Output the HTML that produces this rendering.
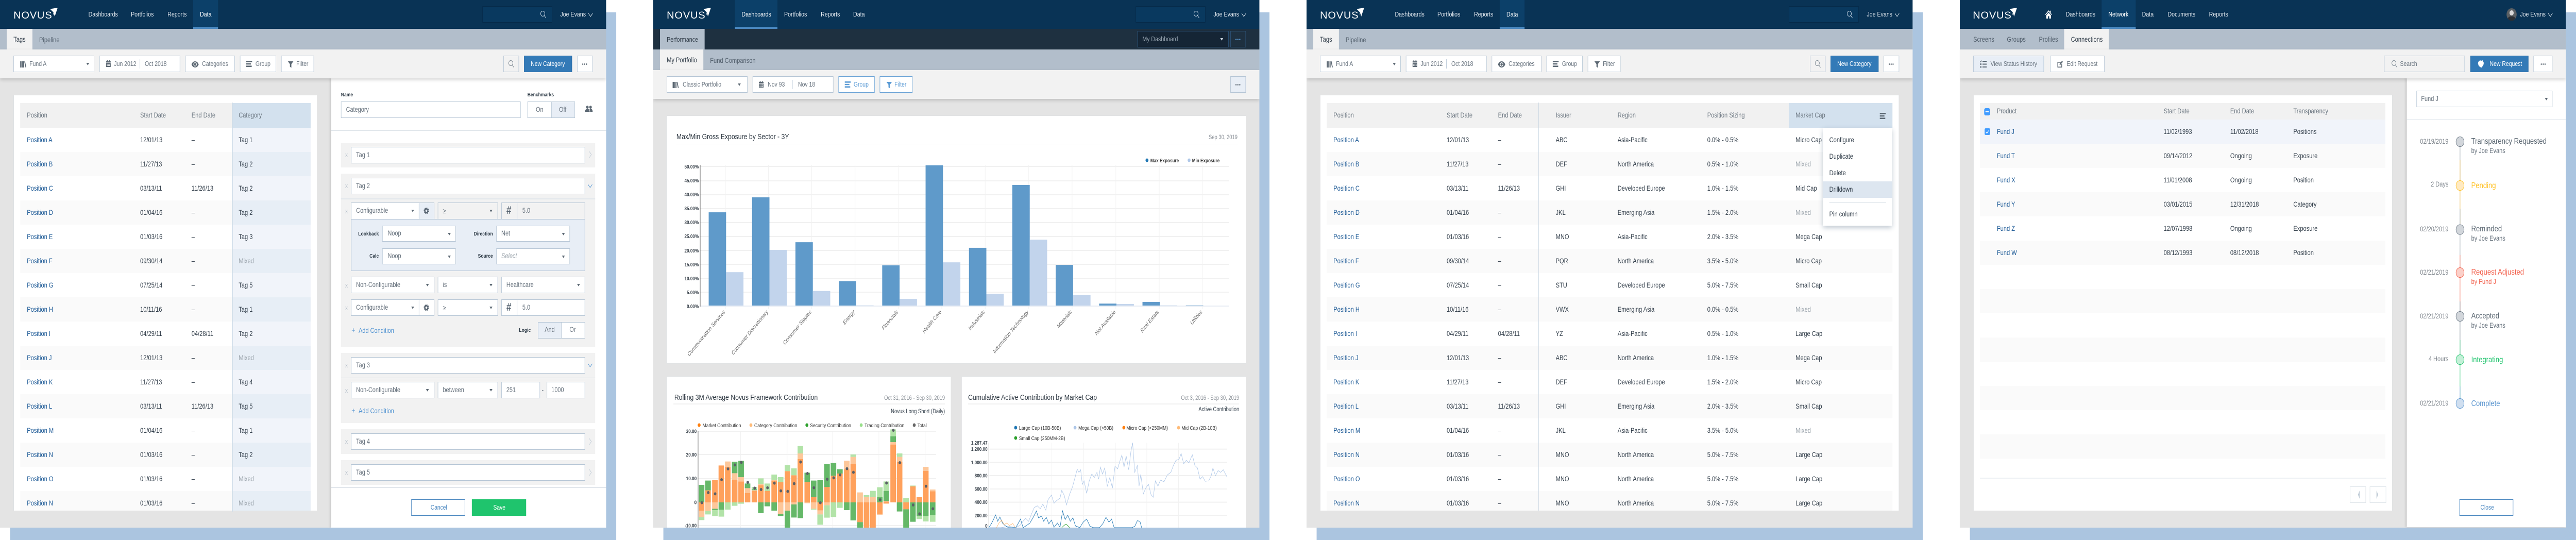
<!DOCTYPE html>
<html lang="en"><head><meta charset="utf-8"><title>Novus</title>
<style>
html,body{margin:0;padding:0;background:#fff;width:100%;height:1048px}
#fit{position:absolute;left:0;top:0;width:100%;height:1048px;overflow:hidden}
#root{position:absolute;left:0;top:0;width:6120px;height:1048px;overflow:hidden;transform-origin:0 0;font-family:"Liberation Sans",sans-serif}
.b{position:absolute;top:24px;width:1440px;height:1024px;background:#abc5e0}
.p{position:absolute;top:0;width:1440px;height:1024px;overflow:hidden;background:#e4e4e4;color:#333f4b;font-size:13.6px}
.a{position:absolute;box-sizing:border-box}
.t{position:absolute;white-space:nowrap;line-height:0}
.nav{position:absolute;left:0;top:0;width:1440px;height:56px;background:#093355}
.nv{font-size:13px;color:#e3eaf0;top:28px}
.act{position:absolute;top:0;height:56px;background:#0c4069;border-bottom:4px solid #4a88c0;box-sizing:border-box}
.logo{position:absolute;left:32px;top:30px;line-height:0;font-size:19.5px;color:#fff;transform:scaleX(1.25);transform-origin:0 0;letter-spacing:.9px;white-space:nowrap}
.srch{position:absolute;left:1146px;top:12px;width:166px;height:32px;background:#09395f;border:1px solid #062a49;box-sizing:border-box}
.sub{position:absolute;left:0;width:1440px;height:40px;background:#b2becb}
.tab{position:absolute;background:#f2f2f2}
.s{font-size:13.6px;color:#55626f}
.tb{position:absolute;left:0;width:1440px;height:56px;background:#f2f2f2;box-shadow:0 3px 7px rgba(0,0,0,.16);z-index:2}
.bx{position:absolute;box-sizing:border-box;background:#fff;border:1px solid #b5c5d5}
.g{font-size:12.8px;color:#6a7580}
.bl{font-size:12.8px;color:#5b9bd5}
.card{position:absolute;background:#fff;box-shadow:0 0 1px #ccd6df}
.rows{position:absolute;overflow:hidden;font-size:13.6px;color:#333f4b}
.r{position:relative;height:47px;line-height:47px}
.r:nth-child(even){background:#fafafa}
.r span{position:absolute;white-space:nowrap;top:0}
.r .l{color:#1d5a96}
.r .m{color:#9aa3ab}
.hd{position:absolute;height:48px;background:#f1f1f1;line-height:48px;color:#6b7680;font-size:13.6px}
.hd span{position:absolute;white-space:nowrap;top:0}
.cat{left:503px;width:187px;height:47px;padding-left:16px;box-sizing:border-box}
.r:nth-child(odd) .cat{background:#f1f4fa}
.r:nth-child(even) .cat{background:#e7eef6}
.rp{position:absolute;background:#fff;box-shadow:-3px 0 4px rgba(0,0,0,.12)}
.tg{position:absolute;left:810px;width:604px;background:#f2f2f2}
.x{font-size:13px;color:#b8c2cc;left:820px}
.v{font-size:13.4px;color:#66717c}
.lb{font-size:10.5px;font-weight:bold;color:#2b3844}
.ov{position:absolute;left:0;top:0;z-index:5;pointer-events:none}
.ct{font-size:15px;color:#2c3640}
.dt{font-size:11.5px;color:#8a9097}
.bt{font-size:12.6px}
.tl{font-size:16px}
.ts{font-size:13.5px}
.td{font-size:13.5px;color:#80878e}
svg text{font-family:"Liberation Sans",sans-serif}
</style></head><body>
<div id="fit"><div id="root">
<svg width="0" height="0" style="position:absolute;left:0;top:0"><defs>
<g id="lib"><path d="M0 1h3v12H0zM3.7 1h2.6v12H3.7zM7 1h2.2v12H7zM9.6 1.4l1.9-.5 3 11.6-1.9.5z"/></g>
<g id="cal"><path d="M2 0h2v2h3V0h2v2h2v2.4H0V2h2zM0 5.4h11V13H0zM1.6 7v1.4h2V7zm2.9 0v1.4h2V7zm2.9 0v1.4h2V7zM1.6 9.6V11h2V9.6zm2.9 0V11h2V9.6zm2.9 0V11h2V9.6z" fill-rule="evenodd"/></g>
<g id="eye"><path d="M8.5 0C4 0 1 3.3 0 6c1 2.7 4 6 8.5 6S16 8.7 17 6C16 3.3 13 0 8.5 0zm0 2a4 4 0 1 1 0 8 4 4 0 0 1 0-8zm0 1.3a2.7 2.7 0 1 0 0 5.4 2.7 2.7 0 0 0 0-5.4z" fill-rule="evenodd"/></g>
<g id="bars"><path d="M0 0h14v2.6H0zM0 4.7h11v2.6H0zM0 9.4h13v2.6H0z"/></g>
<g id="fun"><path d="M0 0h13L8.2 5.4V12.500L4.800 10.500V5.400z"/></g>
<g id="sr"><circle cx="5.500" cy="5.500" r="5" fill="none" stroke-width="1.100"/><path d="M9 9l4 5" fill="none" stroke-width="1.100"/></g>
<g id="dots"><circle cx="1.500" cy="1.500" r="1.400"/><circle cx="6" cy="1.500" r="1.400"/><circle cx="10.500" cy="1.500" r="1.400"/></g>
<g id="cr"><path d="M0 0h7L3.500 4.800z"/></g>
<g id="ppl"><circle cx="5.500" cy="3" r="3"/><circle cx="13" cy="3" r="3"/><path d="M0 12c0-4 2-5.500 5.500-5.500S11 8 11 12zM12 12c0-2-.5-3.500-1.500-4.800C11.500 6.700 12 6.500 13 6.500c3.500 0 5 1.500 5 5.500z"/></g>
<g id="gear"><circle cx="6" cy="7" r="3.600" fill="none" stroke-width="2.600"/><circle cx="6" cy="7" r="5.400" fill="none" stroke-width="1.800" stroke-dasharray="2.400 1.840"/></g>
<g id="chd"><path d="M0 0l5 6 5-6" fill="none" stroke-width="1.100"/></g>
<g id="chr"><path d="M0 0l5 6-5 6" fill="none" stroke-width="1.100"/></g>
<g id="plane"><path d="M0 2.500L18 0 11 17 8 9zM8 9l-1 5 2.500-2.800z"/></g>
<g id="home"><path d="M8 0l3 3V.8h2v4.400L16 8l-1 1-7-6.500L1 9 0 8zM2.500 9.500L8 4.500l5.500 5V16H9.500v-4.500h-3V16h-4z"/></g>
<g id="hist"><path d="M6 1h10v2H6zM6 6.500h10v2H6zM6 12h10v2H6z"/><circle cx="2" cy="7.500" r="1.600"/><circle cx="2" cy="13" r="1.600"/><path d="M.5 2l1.300 1.200L4 .5" fill="none" stroke="#5c6873" stroke-width="1.200"/></g>
<g id="edit"><path d="M1 3h8v1.600H2.600v7.800h7.800V7H12v7H1z"/><path d="M6 9l.6-2.500L12 1l2 2-5.500 5.500z"/></g>
<g id="hs"><path d="M3 4l4-3 3 1 3-1 3 5-1 4-4 5-2 0-5-3-2-5z"/></g>
</defs></svg>

<!-- PANEL 1 -->
<div class="b" style="left:24px"></div>
<div class="p" style="left:0">
<div class="nav"></div>
<div class="logo">NOVUS</div>
<div class="act" style="left:459px;width:59px"></div>
<span class="t nv" style="left:210px">Dashboards</span><span class="t nv" style="left:311px">Portfolios</span><span class="t nv" style="left:398px">Reports</span><span class="t nv" style="left:475px;color:#fff">Data</span>
<div class="srch"></div>
<span class="t nv" style="left:1331px">Joe Evans</span>
<div class="sub" style="top:56px"></div>
<div class="tab" style="left:16px;top:56px;width:61px;height:40px"></div>
<span class="t s" style="left:32px;top:77px;color:#333f4b">Tags</span><span class="t s" style="left:93px;top:77.500px">Pipeline</span>
<div class="tb" style="top:96px"></div>

<div class="card" style="left:33px;top:185px;width:720px;height:806px"></div>
<div class="hd" style="left:48px;top:200px;width:690px"><span style="left:16px">Position</span><span style="left:285px">Start Date</span><span style="left:407px">End Date</span><span style="left:503px;width:187px;height:48px;background:#d3e1ee;padding-left:16px;box-sizing:border-box">Category</span></div>
<div class="rows" style="left:48px;top:248px;width:690px;height:743px">
<div class="r"><span class="l" style="left:16px">Position A</span><span style="left:285px">12/01/13</span><span style="left:407px">–</span><span class="cat">Tag 1</span></div>
<div class="r"><span class="l" style="left:16px">Position B</span><span style="left:285px">11/27/13</span><span style="left:407px">–</span><span class="cat">Tag 2</span></div>
<div class="r"><span class="l" style="left:16px">Position C</span><span style="left:285px">03/13/11</span><span style="left:407px">11/26/13</span><span class="cat">Tag 2</span></div>
<div class="r"><span class="l" style="left:16px">Position D</span><span style="left:285px">01/04/16</span><span style="left:407px">–</span><span class="cat">Tag 2</span></div>
<div class="r"><span class="l" style="left:16px">Position E</span><span style="left:285px">01/03/16</span><span style="left:407px">–</span><span class="cat">Tag 3</span></div>
<div class="r"><span class="l" style="left:16px">Position F</span><span style="left:285px">09/30/14</span><span style="left:407px">–</span><span class="cat m">Mixed</span></div>
<div class="r"><span class="l" style="left:16px">Position G</span><span style="left:285px">07/25/14</span><span style="left:407px">–</span><span class="cat">Tag 5</span></div>
<div class="r"><span class="l" style="left:16px">Position H</span><span style="left:285px">10/11/16</span><span style="left:407px">–</span><span class="cat">Tag 1</span></div>
<div class="r"><span class="l" style="left:16px">Position I</span><span style="left:285px">04/29/11</span><span style="left:407px">04/28/11</span><span class="cat">Tag 2</span></div>
<div class="r"><span class="l" style="left:16px">Position J</span><span style="left:285px">12/01/13</span><span style="left:407px">–</span><span class="cat m">Mixed</span></div>
<div class="r"><span class="l" style="left:16px">Position K</span><span style="left:285px">11/27/13</span><span style="left:407px">–</span><span class="cat">Tag 4</span></div>
<div class="r"><span class="l" style="left:16px">Position L</span><span style="left:285px">03/13/11</span><span style="left:407px">11/26/13</span><span class="cat">Tag 5</span></div>
<div class="r"><span class="l" style="left:16px">Position M</span><span style="left:285px">01/04/16</span><span style="left:407px">–</span><span class="cat">Tag 1</span></div>
<div class="r"><span class="l" style="left:16px">Position N</span><span style="left:285px">01/03/16</span><span style="left:407px">–</span><span class="cat">Tag 2</span></div>
<div class="r"><span class="l" style="left:16px">Position O</span><span style="left:285px">01/03/16</span><span style="left:407px">–</span><span class="cat m">Mixed</span></div>
<div class="r"><span class="l" style="left:16px">Position N</span><span style="left:285px">01/03/16</span><span style="left:407px">–</span><span class="cat m">Mixed</span></div>
</div>
<div class="a" style="left:551px;top:199px;width:2px;height:794px;background:#cfdce8"></div>

<div class="rp" style="left:787px;top:152px;width:653px;height:872px"></div>
<span class="t lb" style="left:810px;top:184px">Name</span><span class="t lb" style="left:1253px;top:184px">Benchmarks</span>
<div class="bx" style="left:810px;top:197px;width:427px;height:32px"></div><span class="t v" style="left:822px;top:213px">Category</span>
<div class="bx" style="left:1253px;top:197px;width:113px;height:32px"></div><div class="a" style="left:1310px;top:198px;width:55px;height:30px;background:#e8eef6;border-left:1px solid #b5c5d5"></div>
<span class="t v" style="left:1273px;top:213px">On</span><span class="t v" style="left:1328px;top:213px">Off</span>
<div class="a" style="left:787px;top:252px;width:653px;height:2px;background:#e2e7ec"></div>

<div class="tg" style="top:277px;height:48px"></div><span class="t x" style="top:301px">x</span>
<div class="bx" style="left:834px;top:285px;width:556px;height:32px"></div><span class="t v" style="left:846px;top:301px">Tag 1</span>

<div class="tg" style="top:337px;height:336px"></div><span class="t x" style="top:361px">x</span>
<div class="bx" style="left:834px;top:345px;width:556px;height:32px"></div><span class="t v" style="left:846px;top:361px">Tag 2</span>
<div class="a" style="left:810px;top:385px;width:604px;height:2px;background:#e2e7ec"></div>
<span class="t x" style="top:410px">x</span>
<div class="bx" style="left:834px;top:393px;width:198px;height:33px"></div><div class="a" style="left:995px;top:394px;width:36px;height:31px;background:#e8eef6;border-left:1px solid #b5c5d5"></div>
<span class="t v" style="left:846px;top:409px">Configurable</span>
<div class="bx" style="left:1040px;top:393px;width:143px;height:33px;background:#f2f2f2"></div><span class="t v" style="left:1052px;top:410px">≥</span>
<div class="bx" style="left:1191px;top:393px;width:199px;height:33px;background:#f2f2f2"></div><div class="a" style="left:1228px;top:394px;width:1px;height:31px;background:#b5c5d5"></div>
<span class="t" style="left:1203px;top:409px;font-size:21px;font-weight:bold;color:#55626f">#</span><span class="t v" style="left:1241px;top:409px">5.0</span>
<div class="a" style="left:834px;top:425px;width:556px;height:101px;background:#e8eef6;border:1px solid #b5c5d5"></div>
<span class="t lb" style="right:540px;top:453.500px">Lookback</span><span class="t lb" style="right:269px;top:453.500px">Direction</span>
<span class="t lb" style="right:540px;top:497px">Calc</span><span class="t lb" style="right:269px;top:497px">Source</span>
<div class="bx" style="left:908px;top:438px;width:175px;height:31px"></div><span class="t v" style="left:921px;top:453px">Noop</span>
<div class="bx" style="left:1179px;top:438px;width:175px;height:31px"></div><span class="t v" style="left:1191px;top:453px">Net</span>
<div class="bx" style="left:908px;top:482px;width:175px;height:31px"></div><span class="t v" style="left:921px;top:497px">Noop</span>
<div class="bx" style="left:1179px;top:482px;width:175px;height:31px"></div><span class="t v" style="left:1191px;top:497px;font-style:italic;color:#9aa3ab">Select</span>

<span class="t x" style="top:554px">x</span>
<div class="bx" style="left:834px;top:537px;width:198px;height:32px"></div><span class="t v" style="left:846px;top:553px">Non-Configurable</span>
<div class="bx" style="left:1040px;top:537px;width:143px;height:32px"></div><span class="t v" style="left:1052px;top:553px">is</span>
<div class="bx" style="left:1191px;top:537px;width:199px;height:32px"></div><span class="t v" style="left:1203px;top:553px">Healthcare</span>
<span class="t x" style="top:598px">x</span>
<div class="bx" style="left:834px;top:581px;width:198px;height:32px"></div><div class="a" style="left:995px;top:582px;width:1px;height:30px;background:#b5c5d5"></div><span class="t v" style="left:846px;top:597px">Configurable</span>
<div class="bx" style="left:1040px;top:581px;width:143px;height:32px"></div><span class="t v" style="left:1052px;top:598px">≥</span>
<div class="bx" style="left:1191px;top:581px;width:199px;height:32px"></div><div class="a" style="left:1228px;top:582px;width:1px;height:30px;background:#b5c5d5"></div>
<span class="t" style="left:1203px;top:597px;font-size:21px;font-weight:bold;color:#55626f">#</span><span class="t v" style="left:1241px;top:597px">5.0</span>
<span class="t v" style="left:835px;top:642px;color:#4a8fd0;font-size:15px">+</span><span class="t v" style="left:852px;top:642px;color:#4a8fd0">Add Condition</span>
<span class="t lb" style="left:1233px;top:641px">Logic</span>
<div class="bx" style="left:1278px;top:625px;width:112px;height:32px"></div><div class="a" style="left:1279px;top:626px;width:55px;height:30px;background:#e8eef6;border-right:1px solid #b5c5d5"></div>
<span class="t v" style="left:1294px;top:640px">And</span><span class="t v" style="left:1353px;top:640px">Or</span>

<div class="tg" style="top:685px;height:136px"></div><span class="t x" style="top:709px">x</span>
<div class="bx" style="left:834px;top:693px;width:556px;height:32px"></div><span class="t v" style="left:846px;top:709px">Tag 3</span>
<div class="a" style="left:810px;top:733px;width:604px;height:1px;background:#c9d3dc"></div>
<span class="t x" style="top:758px">x</span>
<div class="bx" style="left:834px;top:741px;width:198px;height:32px"></div><span class="t v" style="left:846px;top:757px">Non-Configurable</span>
<div class="bx" style="left:1040px;top:741px;width:143px;height:32px"></div><span class="t v" style="left:1052px;top:757px">between</span>
<div class="bx" style="left:1191px;top:741px;width:92px;height:32px"></div><span class="t v" style="left:1203px;top:757px">251</span>
<span class="t v" style="left:1287px;top:757px">-</span>
<div class="bx" style="left:1299px;top:741px;width:91px;height:32px"></div><span class="t v" style="left:1310px;top:757px">1000</span>
<span class="t v" style="left:835px;top:798px;color:#4a8fd0;font-size:15px">+</span><span class="t v" style="left:852px;top:798px;color:#4a8fd0">Add Condition</span>

<div class="tg" style="top:833px;height:48px"></div><span class="t x" style="top:857px">x</span>
<div class="bx" style="left:834px;top:841px;width:556px;height:32px"></div><span class="t v" style="left:846px;top:857px">Tag 4</span>
<div class="tg" style="top:893px;height:48px"></div><span class="t x" style="top:917px">x</span>
<div class="bx" style="left:834px;top:901px;width:556px;height:32px"></div><span class="t v" style="left:846px;top:917px">Tag 5</span>
<div class="a" style="left:787px;top:945px;width:653px;height:2px;background:#e2e7ec"></div>
<div class="bx" style="left:977px;top:969px;width:128px;height:32px;border-color:#4a87c0"></div><span class="t bt" style="left:1023px;top:985px;color:#4a87c0">Cancel</span>
<div class="a" style="left:1121px;top:969px;width:129px;height:32px;background:#1fc46d"></div><span class="t bt" style="left:1172px;top:985px;color:#fff">Save</span>

<div class="bx" style="left:32px;top:108px;width:192px;height:32px;z-index:3"></div>
<div class="bx" style="left:236px;top:108px;width:192px;height:32px;z-index:3"></div>
<div class="bx" style="left:440px;top:108px;width:118px;height:32px;z-index:3"></div>
<div class="bx" style="left:570px;top:108px;width:86px;height:32px;z-index:3"></div>
<div class="bx" style="left:668px;top:108px;width:78px;height:32px;z-index:3"></div>
<div class="bx" style="left:1196px;top:108px;width:37px;height:32px;z-index:3;background:#f2f2f2"></div>
<div class="a" style="left:1245px;top:108px;width:114px;height:32px;z-index:3;background:#337ab7;border:1px solid #2f6fa8"></div>
<div class="bx" style="left:1371px;top:108px;width:37px;height:32px;z-index:3"></div>
<div style="position:absolute;left:0;top:0;z-index:4">
<span class="t g" style="left:70px;top:124px">Fund A</span><span class="t g" style="left:271px;top:124px">Jun 2012</span><span class="t g" style="left:344px;top:124px">Oct 2018</span><span class="t g" style="left:480px;top:124px">Categories</span><span class="t g" style="left:607px;top:124px">Group</span><span class="t g" style="left:704px;top:124px">Filter</span><span class="t g" style="left:1261px;top:124px;color:#fff">New Category</span>
</div>
<svg class="ov" width="1440" height="1024">
<use href="#plane" x="119" y="15" fill="#fff"/>
<use href="#sr" x="1284" y="21" stroke="#c4d2e0" fill="none"/>
<use href="#chd" x="1398" y="26" stroke="#d8e2ea"/>
<use href="#lib" x="48" y="118" fill="#5c6873"/><use href="#cr" x="205" y="122" fill="#5c6873"/>
<use href="#cal" x="252" y="117" fill="#5c6873"/><rect x="332" y="115" width="1" height="18" fill="#b5c5d5"/>
<use href="#eye" x="455" y="119" fill="#5c6873"/><use href="#bars" x="585" y="118" fill="#5c6873"/><use href="#fun" x="684" y="119" fill="#5c6873"/>
<use href="#sr" x="1208" y="117" stroke="#7b8791"/><use href="#dots" x="1383" y="123" fill="#5c6873"/>
<use href="#ppl" x="1390" y="205" fill="#5c6873"/>
<use href="#chr" x="1400" y="294" stroke="#c4ced8"/><use href="#chd" x="1397" y="358" stroke="#5b9bd5"/><use href="#chd" x="1397" y="706" stroke="#5b9bd5"/><use href="#chr" x="1400" y="851" stroke="#c4ced8"/><use href="#chr" x="1400" y="911" stroke="#c4ced8"/>
<use href="#cr" x="977" y="407" fill="#5c6873"/><use href="#gear" x="1007" y="402" fill="none" stroke="#55626f"/><use href="#cr" x="1163" y="407" fill="#5c6873"/>
<use href="#cr" x="1064" y="452" fill="#5c6873"/><use href="#cr" x="1335" y="452" fill="#5c6873"/><use href="#cr" x="1064" y="496" fill="#5c6873"/><use href="#cr" x="1335" y="496" fill="#5c6873"/>
<use href="#cr" x="1012" y="551" fill="#5c6873"/><use href="#cr" x="1163" y="551" fill="#5c6873"/><use href="#cr" x="1371" y="551" fill="#5c6873"/>
<use href="#cr" x="977" y="595" fill="#5c6873"/><use href="#gear" x="1007" y="590" fill="none" stroke="#55626f"/><use href="#cr" x="1163" y="595" fill="#5c6873"/>
<use href="#cr" x="1012" y="755" fill="#5c6873"/><use href="#cr" x="1163" y="755" fill="#5c6873"/>
</svg>
</div>

<!-- PANEL 2 -->
<div class="b" style="left:1576px"></div>
<div class="p" style="left:1552px">
<div class="nav"></div>
<div class="logo">NOVUS</div>
<div class="act" style="left:194px;width:101px"></div>
<span class="t nv" style="left:210px;color:#fff">Dashboards</span><span class="t nv" style="left:311px">Portfolios</span><span class="t nv" style="left:398px">Reports</span><span class="t nv" style="left:475px">Data</span>
<div class="srch"></div>
<span class="t nv" style="left:1331px">Joe Evans</span>
<div class="a" style="left:0;top:56px;width:1440px;height:40px;background:#1e3040"></div>
<div class="a" style="left:16px;top:56px;width:106px;height:40px;background:#b2becb"></div>
<span class="t s" style="left:32px;top:77px;font-size:13px;color:#333f4b">Performance</span>
<div class="a" style="left:1150px;top:60px;width:217px;height:32px;background:#152535;border:1px solid #2d5478"></div>
<span class="t s" style="left:1162px;top:76px;color:#9aa7b3;font-size:13px">My Dashboard</span>
<div class="a" style="left:1371px;top:60px;width:37px;height:32px;border:1px solid #2d5478"></div>
<div class="sub" style="top:96px"></div>
<div class="tab" style="left:16px;top:96px;width:103px;height:40px"></div>
<span class="t s" style="left:32px;top:117px;color:#333f4b">My Portfolio</span><span class="t s" style="left:135px;top:118px">Fund Comparison</span>
<div class="tb" style="top:136px"></div>

<div class="card" style="left:32px;top:225px;width:1376px;height:480px"></div>
<span class="t ct" style="left:55px;top:266px">Max/Min Gross Exposure by Sector - 3Y</span>
<span class="t dt" style="right:52px;top:267px">Sep 30, 2019</span>
<div class="a" style="left:55px;top:279px;width:1333px;height:1px;background:#eee"></div>
<div class="card" style="left:32px;top:731px;width:675px;height:293px"></div>
<div class="card" style="left:733px;top:731px;width:675px;height:293px"></div>
<span class="t ct" style="left:50px;top:772px">Rolling 3M Average Novus Framework Contribution</span>
<span class="t dt" style="right:747px;top:773px">Oct 31, 2016 - Sep 30, 2019</span>
<div class="a" style="left:48px;top:783px;width:645px;height:2px;background:#f0f0f0"></div>
<span class="t dt" style="right:747px;top:799px;color:#333f4b">Novus Long Short (Daily)</span>
<span class="t ct" style="left:748px;top:772px">Cumulative Active Contribution by Market Cap</span>
<span class="t dt" style="right:48px;top:773px">Oct 3, 2016 - Sep 30, 2019</span>
<div class="a" style="left:748px;top:783px;width:644px;height:2px;background:#f0f0f0"></div>
<span class="t dt" style="right:48px;top:795px;color:#333f4b">Active Contribution</span>

<svg class="a" style="left:0;top:0" width="1440" height="1024">
<g fill="none" stroke="#f0f0f0">
<path d="M171.500 320V600M273.500 320V600M376.500 320V600M479.500 320V600M582.500 320V600M685.500 320V600M788.500 320V600M892 320V600M995 320V600M1099 320V600M1202 320V600M1305 320V600"/></g>
<g fill="#f1f1f1"><rect x="111" y="322" width="1257" height="2"/><rect x="111" y="350" width="1257" height="2"/><rect x="111" y="377" width="1257" height="2"/><rect x="111" y="404" width="1257" height="2"/><rect x="111" y="431" width="1257" height="2"/><rect x="111" y="458" width="1257" height="2"/><rect x="111" y="485" width="1257" height="2"/><rect x="111" y="512" width="1257" height="2"/><rect x="111" y="539" width="1257" height="2"/><rect x="111" y="566" width="1257" height="2"/></g>
<g transform="translate(-52,0) scale(1.0204,.41494)">
<g fill="#5f9aca"><rect x="180" y="993" width="40.500" height="439"/><rect x="281" y="923" width="40.500" height="509"/><rect x="382" y="1133" width="40.500" height="299"/><rect x="483" y="1315" width="40.500" height="117"/><rect x="584" y="1241" width="40.500" height="191"/><rect x="685" y="773" width="40.500" height="659"/><rect x="786" y="1159" width="40.500" height="273"/><rect x="887" y="865" width="40.500" height="567"/><rect x="988" y="1239" width="40.500" height="193"/><rect x="1089" y="1420" width="40.500" height="12"/><rect x="1190" y="1412" width="40.500" height="20"/><rect x="1291" y="1428" width="40.500" height="4"/></g>
<g fill="#c2d4ec"><rect x="220.500" y="1273" width="40.500" height="159"/><rect x="321.500" y="1169" width="40.500" height="263"/><rect x="422.500" y="1361" width="40.500" height="71"/><rect x="523.500" y="1428" width="40.500" height="4"/><rect x="624.500" y="1398" width="40.500" height="34"/><rect x="725.500" y="1227" width="40.500" height="205"/><rect x="826.500" y="1374" width="40.500" height="58"/><rect x="927.500" y="1121" width="40.500" height="311"/><rect x="1028.500" y="1380" width="40.500" height="52"/><rect x="1129.500" y="1422" width="40.500" height="10"/><rect x="1230.500" y="1428" width="40.500" height="4"/><rect x="1331.500" y="1430" width="40.500" height="2"/></g>
</g>
<rect x="111" y="593" width="1257" height="2" fill="#e8edf3"/>
<rect x="111" y="320" width="1" height="275" fill="#555"/>
<g font-size="10" font-weight="bold" fill="#3a434c" text-anchor="end"><text x="108" y="327">50.00%</text><text x="108" y="354">45.00%</text><text x="108" y="381">40.00%</text><text x="108" y="408">35.00%</text><text x="108" y="435">30.00%</text><text x="108" y="462">25.00%</text><text x="108" y="490">20.00%</text><text x="108" y="517">15.00%</text><text x="108" y="544">10.00%</text><text x="108" y="571">5.00%</text><text x="108" y="598">0.00%</text></g>
<g font-size="11" font-style="italic" fill="#666" text-anchor="end">
<text transform="translate(171.500,606) rotate(-45)">Communication Services</text><text transform="translate(273.500,606) rotate(-45)">Consumer Discretionary</text><text transform="translate(376.500,606) rotate(-45)">Consumer Staples</text><text transform="translate(479.500,606) rotate(-45)">Energy</text><text transform="translate(582.500,606) rotate(-45)">Financials</text><text transform="translate(685.500,606) rotate(-45)">Health Care</text><text transform="translate(788.500,606) rotate(-45)">Industrials</text><text transform="translate(892,606) rotate(-45)">Information Technology</text><text transform="translate(995,606) rotate(-45)">Materials</text><text transform="translate(1099,606) rotate(-45)">Not Available</text><text transform="translate(1202,606) rotate(-45)">Real Estate</text><text transform="translate(1305,606) rotate(-45)">Utilities</text></g>
<circle cx="1173" cy="311" r="3.500" fill="#1f77b4"/><text x="1181" y="315" font-size="10" font-weight="bold" fill="#333">Max Exposure</text>
<circle cx="1273" cy="311" r="3.500" fill="#aec7e8"/><text x="1280" y="315" font-size="10" font-weight="bold" fill="#333">Min Exposure</text>

<g font-size="10.500" fill="#333"><circle cx="109" cy="825" r="3.500" fill="#ff7f0e"/><text x="117" y="829">Market Contribution</text><circle cx="232" cy="825" r="3.500" fill="#ffbb78"/><text x="240" y="829">Category Contribution</text><circle cx="365" cy="825" r="3.500" fill="#2ca02c"/><text x="372.500" y="829">Security Contribution</text><circle cx="494" cy="825" r="3.500" fill="#98df8a"/><text x="502" y="829">Trading Contribution</text><circle cx="620" cy="825" r="3.500" fill="#666"/><text x="627.500" y="829">Total</text></g>
<g fill="#f1f1f1"><rect x="106" y="836" width="566" height="2"/><rect x="106" y="881" width="566" height="2"/><rect x="106" y="928" width="566" height="2"/><rect x="106" y="1019" width="566" height="2"/></g>
<path d="M207.500 836V1024M318 836V1024M426 836V1024M536 836V1024M646 836V1024" stroke="#f0f0f0" fill="none"/>
<rect x="106" y="836" width="1" height="188" fill="#555"/>
<g font-size="10" font-weight="bold" fill="#3a434c" text-anchor="end"><text x="103" y="840.500">30.00</text><text x="103" y="886">20.00</text><text x="103" y="932">10.00</text><text x="103" y="978.500">0</text><text x="103" y="1023.500">-10.00</text></g>
<g transform="translate(-52,650) scale(1.0204,.33333)">
<path fill="#ffa15c" d="M172 905h13V975h-13zM188 845h13V975h-13zM203 760h13V975h-13zM218 768h13V975h-13zM234 843h13V975h-13zM249 853h13V975h-13zM264 920h13V975h-13zM280 908h13V975h-13zM295 875h13V975h-13zM310 908h13V975h-13zM326 848h13V975h-13zM341 858h13V975h-13zM357 793h13V975h-13zM372 817h13V975h-13zM387 723h13V975h-13zM403 855h13V975h-13zM418 945h13V975h-13zM449 885h13V975h-13zM464 820h13V975h-13zM479 807h13V975h-13zM495 782h13V975h-13zM510 752h13V975h-13zM587 970h13V975h-13zM603 638h13V975h-13zM618 738h13V975h-13zM649 882h13V975h-13zM664 945h13V975h-13zM679 792h13V975h-13zM695 910h13V975h-13zM157 975h13V1023h-13zM433 975h13V1022h-13zM526 975h13V1090h-13zM541 975h13V1122h-13zM556 975h13V1122h-13zM572 975h13V1042h-13zM587 975h13V982h-13zM633 975h13V1015h-13z"/>
<path fill="#fdc79a" d="M218 737h13V768h-13zM234 805h13V843h-13zM249 828h13V853h-13zM264 892h13V920h-13zM280 904h13V908h-13zM295 868h13V875h-13zM387 690h13V723h-13zM495 732h13V782h-13zM510 710h13V752h-13zM526 917h13V975h-13zM541 942h13V975h-13zM556 945h13V975h-13zM603 624h13V638h-13zM618 710h13V738h-13zM679 768h13V792h-13zM695 900h13V910h-13zM326 843h13V848h-13zM587 968h13V970h-13zM157 1023h13V1060h-13zM172 975h13V1025h-13zM188 975h13V1012h-13zM341 975h13V1042h-13zM357 975h13V1023h-13zM372 975h13V987h-13zM403 975h13V980h-13zM418 975h13V1012h-13zM433 1022h13V1045h-13zM449 975h13V992h-13zM572 1042h13V1047h-13z"/>
<path fill="#65b868" d="M157 873h13V975h-13zM172 848h13V905h-13zM234 738h13V805h-13zM249 733h13V828h-13zM264 865h13V892h-13zM280 898h13V904h-13zM403 802h13V855h-13zM418 848h13V945h-13zM433 846h13V975h-13zM449 752h13V885h-13zM464 745h13V820h-13zM479 782h13V807h-13zM572 945h13V975h-13zM587 908h13V968h-13zM603 590h13V624h-13zM188 1012h13V1020h-13zM203 975h13V1018h-13zM295 975h13V1038h-13zM310 975h13V998h-13zM326 975h13V1023h-13zM341 1042h13V1054h-13zM357 1023h13V1122h-13zM372 987h13V1063h-13zM387 975h13V1067h-13zM495 975h13V1020h-13zM510 975h13V1080h-13zM526 1090h13V1122h-13zM618 975h13V1028h-13zM633 1015h13V1122h-13zM649 975h13V1088h-13zM664 975h13V1054h-13zM679 975h13V1054h-13zM695 975h13V1050h-13z"/>
<path fill="#b2e3a8" d="M280 885h13V898h-13zM295 835h13V868h-13zM310 865h13V908h-13zM326 813h13V843h-13zM341 828h13V858h-13zM357 758h13V793h-13zM372 777h13V817h-13zM387 647h13V690h-13zM510 696h13V710h-13zM541 933h13V942h-13zM556 908h13V945h-13zM572 887h13V945h-13zM587 853h13V908h-13zM603 550h13V590h-13zM618 690h13V710h-13zM633 950h13V975h-13zM649 877h13V882h-13zM157 1060h13V1078h-13zM172 1025h13V1045h-13zM188 1020h13V1055h-13zM203 1018h13V1058h-13zM218 975h13V1017h-13zM234 975h13V995h-13zM249 975h13V983h-13zM418 1012h13V1017h-13zM433 1045h13V1105h-13zM449 992h13V1064h-13zM464 975h13V1060h-13zM479 975h13V1007h-13zM664 1054h13V1072h-13zM679 1054h13V1086h-13zM695 1050h13V1088h-13z"/>
<g fill="#5a5f66"><ellipse cx="164" cy="977" rx="3" ry="9"/><ellipse cx="179" cy="918" rx="3" ry="9"/><ellipse cx="195" cy="925" rx="3" ry="9"/><ellipse cx="210" cy="843" rx="3" ry="9"/><ellipse cx="225" cy="780" rx="3" ry="9"/><ellipse cx="241" cy="757" rx="3" ry="9"/><ellipse cx="256" cy="742" rx="3" ry="9"/><ellipse cx="271" cy="858" rx="3" ry="9"/><ellipse cx="287" cy="892" rx="3" ry="9"/><ellipse cx="302" cy="900" rx="3" ry="9"/><ellipse cx="317" cy="890" rx="3" ry="9"/><ellipse cx="333" cy="863" rx="3" ry="9"/><ellipse cx="348" cy="908" rx="3" ry="9"/><ellipse cx="364" cy="911" rx="3" ry="9"/><ellipse cx="379" cy="866" rx="3" ry="9"/><ellipse cx="394" cy="740" rx="3" ry="9"/><ellipse cx="410" cy="807" rx="3" ry="9"/><ellipse cx="425" cy="890" rx="3" ry="9"/><ellipse cx="440" cy="977" rx="3" ry="9"/><ellipse cx="456" cy="840" rx="3" ry="9"/><ellipse cx="471" cy="832" rx="3" ry="9"/><ellipse cx="486" cy="815" rx="3" ry="9"/><ellipse cx="502" cy="779" rx="3" ry="9"/><ellipse cx="517" cy="800" rx="3" ry="9"/><ellipse cx="579" cy="960" rx="3" ry="9"/><ellipse cx="594" cy="862" rx="3" ry="9"/><ellipse cx="610" cy="555" rx="3" ry="9"/><ellipse cx="625" cy="744" rx="3" ry="9"/><ellipse cx="656" cy="990" rx="3" ry="9"/><ellipse cx="671" cy="1042" rx="3" ry="9"/><ellipse cx="686" cy="881" rx="3" ry="9"/><ellipse cx="702" cy="1012" rx="3" ry="9"/></g>
<g fill="none" stroke="#f0f0f0"><path vector-effect="non-scaling-stroke" d="M905 628V1122M979 628V1122M1053 628V1122M1127 628V1122M1200 628V1122M1274 628V1122"/></g>
<g fill="none" stroke="#f1f1f1" stroke-width="2"><path vector-effect="non-scaling-stroke" d="M832 665H1387M832 742H1387M832 819H1387M832 897H1387M832 974H1387M832 1051H1387"/></g>
<polyline vector-effect="non-scaling-stroke" fill="none" stroke="#aec7e8" points="832,1122 860,1122 880,1115 895,1122 905,1108 912,1085 918,1068 925,1085 932,1040 938,1005 945,995 952,1012 958,985 965,1020 970,960 978,932 984,980 990,965 998,950 1002,905 1008,935 1013,990 1020,930 1027,885 1033,830 1038,782 1042,800 1046,785 1050,870 1054,850 1060,922 1066,850 1072,810 1078,830 1084,800 1088,840 1092,770 1097,810 1102,775 1108,880 1114,830 1120,892 1126,765 1132,780 1138,730 1142,700 1147,770 1152,705 1158,785 1163,680 1167,628 1172,800 1178,760 1182,880 1186,812 1192,925 1198,890 1204,870 1210,930 1215,945 1220,850 1226,880 1232,845 1240,855 1248,815 1256,800 1262,760 1268,730 1275,725 1280,690 1286,750 1292,730 1298,745 1306,698 1312,760 1318,775 1324,840 1330,825 1336,852 1344,850 1350,820 1354,775 1360,820 1366,790 1372,800 1378,785 1387,828"/>
<polyline vector-effect="non-scaling-stroke" fill="none" stroke="#1f77b4" points="832,1122 838,1100 843,1075 848,1048 853,1085 858,1060 864,1095 870,1110 878,1122 895,1122 900,1100 906,1072 912,1122 920,1110 928,1095 936,1060 943,1025 948,1065 955,1055 960,1085 966,1062 972,1100 978,1078 984,1120 992,1095 998,1120 1004,1025 1010,1075 1016,1050 1022,1085 1028,1065 1034,1112 1044,1122 1052,1090 1060,1072 1068,1115 1076,1122 1090,1122 1098,1098 1105,1062 1112,1090 1118,1072 1124,1122 1165,1122 1172,1115 1178,1082 1184,1085 1188,1122"/>
<polyline vector-effect="non-scaling-stroke" fill="none" stroke="#ffbb78" points="850,1122 856,1095 862,1078 868,1105 874,1095 880,1110 888,1098 894,1122"/>
<polyline vector-effect="non-scaling-stroke" fill="none" stroke="#2ca02c" points="1002,1122 1008,1108 1012,1102 1016,1110 1020,1122"/>
</g>
<rect x="797" y="859" width="1" height="165" fill="#555"/>
<g font-size="10" font-weight="bold" fill="#3a434c" text-anchor="end"><text x="794" y="863">1,287.47</text><text x="794" y="875">1,200.00</text><text x="794" y="901">1,000.00</text><text x="794" y="926.500">800.00</text><text x="794" y="952.500">600.00</text><text x="794" y="978">400.00</text><text x="794" y="1004">200.00</text><text x="794" y="1024">0</text></g>
<g font-size="10.500" fill="#333"><circle cx="861" cy="830" r="3.500" fill="#1f77b4"/><text x="869" y="834">Large Cap (10B-50B)</text><circle cx="1002" cy="830" r="3.500" fill="#aec7e8"/><text x="1010" y="834">Mega Cap (&gt;50B)</text><circle cx="1118" cy="830" r="3.500" fill="#ff7f0e"/><text x="1124" y="834">Micro Cap (&lt;250MM)</text><circle cx="1248" cy="830" r="3.500" fill="#ffbb78"/><text x="1255" y="834">Mid Cap (2B-10B)</text><circle cx="861" cy="850" r="3.500" fill="#2ca02c"/><text x="869" y="854">Small Cap (250MM-2B)</text></g>
</svg>

<div class="bx" style="left:32px;top:148px;width:192px;height:32px;z-index:3"></div>
<div class="bx" style="left:236px;top:148px;width:192px;height:32px;z-index:3"></div>
<div class="bx" style="left:440px;top:148px;width:86px;height:32px;z-index:3;border-color:#6ba3d6"></div>
<div class="bx" style="left:538px;top:148px;width:78px;height:32px;z-index:3;border-color:#6ba3d6"></div>
<div class="bx" style="left:1371px;top:148px;width:37px;height:32px;z-index:3;background:#e8eef6"></div>
<div style="position:absolute;left:0;top:0;z-index:4">
<span class="t g" style="left:70px;top:164px">Classic Portfolio</span><span class="t g" style="left:272px;top:164px">Nov 93</span><span class="t g" style="left:344px;top:164px">Nov 18</span><span class="t bl" style="left:476px;top:164px">Group</span><span class="t bl" style="left:573px;top:164px">Filter</span>
</div>
<svg class="ov" width="1440" height="1024">
<use href="#plane" x="119" y="15" fill="#fff"/>
<use href="#sr" x="1284" y="21" stroke="#c4d2e0" fill="none"/>
<use href="#chd" x="1398" y="26" stroke="#d8e2ea"/>
<use href="#cr" x="1347" y="74" fill="#c4ced8"/><use href="#dots" x="1383" y="75" fill="#5b9bd5"/>
<use href="#lib" x="46" y="158" fill="#5c6873"/><use href="#cr" x="201" y="162" fill="#5c6873"/>
<use href="#cal" x="251" y="157" fill="#5c6873"/><rect x="330" y="155" width="1" height="18" fill="#b5c5d5"/>
<use href="#bars" x="455" y="158" fill="#5b9bd5"/><use href="#fun" x="554" y="159" fill="#5b9bd5"/>
<use href="#dots" x="1383" y="163" fill="#5c6873"/>
</svg>
</div>

<!-- PANEL 3 -->
<div class="b" style="left:3128px"></div>
<div class="p" style="left:3104px">
<div class="nav"></div>
<div class="logo">NOVUS</div>
<div class="act" style="left:459px;width:59px"></div>
<span class="t nv" style="left:210px">Dashboards</span><span class="t nv" style="left:311px">Portfolios</span><span class="t nv" style="left:398px">Reports</span><span class="t nv" style="left:475px;color:#fff">Data</span>
<div class="srch"></div>
<span class="t nv" style="left:1331px">Joe Evans</span>
<div class="sub" style="top:56px"></div>
<div class="tab" style="left:16px;top:56px;width:61px;height:40px"></div>
<span class="t s" style="left:32px;top:77px;color:#333f4b">Tags</span><span class="t s" style="left:93px;top:77.500px">Pipeline</span>
<div class="tb" style="top:96px"></div>
<div class="card" style="left:33px;top:185px;width:1374px;height:806px"></div>
<div class="hd" style="left:48px;top:200px;width:1344px"><span style="left:16px">Position</span><span style="left:285px">Start Date</span><span style="left:407px">End Date</span><span style="left:544px">Issuer</span><span style="left:691px">Region</span><span style="left:904px">Position Sizing</span><span style="left:1098px;width:246px;height:48px;background:#d3e1ee;padding-left:16px;box-sizing:border-box">Market Cap</span></div>
<div class="rows" style="left:48px;top:248px;width:1344px;height:743px">
<div class="r"><span class="l" style="left:16px">Position A</span><span style="left:285px">12/01/13</span><span style="left:407px">–</span><span style="left:544px">ABC</span><span style="left:691px">Asia-Pacific</span><span style="left:904px">0.0% - 0.5%</span><span style="left:1114px">Micro Cap</span></div>
<div class="r"><span class="l" style="left:16px">Position B</span><span style="left:285px">11/27/13</span><span style="left:407px">–</span><span style="left:544px">DEF</span><span style="left:691px">North America</span><span style="left:904px">0.5% - 1.0%</span><span class="m" style="left:1114px">Mixed</span></div>
<div class="r"><span class="l" style="left:16px">Position C</span><span style="left:285px">03/13/11</span><span style="left:407px">11/26/13</span><span style="left:544px">GHI</span><span style="left:691px">Developed Europe</span><span style="left:904px">1.0% - 1.5%</span><span style="left:1114px">Mid Cap</span></div>
<div class="r"><span class="l" style="left:16px">Position D</span><span style="left:285px">01/04/16</span><span style="left:407px">–</span><span style="left:544px">JKL</span><span style="left:691px">Emerging Asia</span><span style="left:904px">1.5% - 2.0%</span><span class="m" style="left:1114px">Mixed</span></div>
<div class="r"><span class="l" style="left:16px">Position E</span><span style="left:285px">01/03/16</span><span style="left:407px">–</span><span style="left:544px">MNO</span><span style="left:691px">Asia-Pacific</span><span style="left:904px">2.0% - 3.5%</span><span style="left:1114px">Mega Cap</span></div>
<div class="r"><span class="l" style="left:16px">Position F</span><span style="left:285px">09/30/14</span><span style="left:407px">–</span><span style="left:544px">PQR</span><span style="left:691px">North America</span><span style="left:904px">3.5% - 5.0%</span><span style="left:1114px">Micro Cap</span></div>
<div class="r"><span class="l" style="left:16px">Position G</span><span style="left:285px">07/25/14</span><span style="left:407px">–</span><span style="left:544px">STU</span><span style="left:691px">Developed Europe</span><span style="left:904px">5.0% - 7.5%</span><span style="left:1114px">Small Cap</span></div>
<div class="r"><span class="l" style="left:16px">Position H</span><span style="left:285px">10/11/16</span><span style="left:407px">–</span><span style="left:544px">VWX</span><span style="left:691px">Emerging Asia</span><span style="left:904px">0.0% - 0.5%</span><span class="m" style="left:1114px">Mixed</span></div>
<div class="r"><span class="l" style="left:16px">Position I</span><span style="left:285px">04/29/11</span><span style="left:407px">04/28/11</span><span style="left:544px">YZ</span><span style="left:691px">Asia-Pacific</span><span style="left:904px">0.5% - 1.0%</span><span style="left:1114px">Large Cap</span></div>
<div class="r"><span class="l" style="left:16px">Position J</span><span style="left:285px">12/01/13</span><span style="left:407px">–</span><span style="left:544px">ABC</span><span style="left:691px">North America</span><span style="left:904px">1.0% - 1.5%</span><span style="left:1114px">Mega Cap</span></div>
<div class="r"><span class="l" style="left:16px">Position K</span><span style="left:285px">11/27/13</span><span style="left:407px">–</span><span style="left:544px">DEF</span><span style="left:691px">Developed Europe</span><span style="left:904px">1.5% - 2.0%</span><span style="left:1114px">Micro Cap</span></div>
<div class="r"><span class="l" style="left:16px">Position L</span><span style="left:285px">03/13/11</span><span style="left:407px">11/26/13</span><span style="left:544px">GHI</span><span style="left:691px">Emerging Asia</span><span style="left:904px">2.0% - 3.5%</span><span style="left:1114px">Small Cap</span></div>
<div class="r"><span class="l" style="left:16px">Position M</span><span style="left:285px">01/04/16</span><span style="left:407px">–</span><span style="left:544px">JKL</span><span style="left:691px">Asia-Pacific</span><span style="left:904px">3.5% - 5.0%</span><span class="m" style="left:1114px">Mixed</span></div>
<div class="r"><span class="l" style="left:16px">Position N</span><span style="left:285px">01/03/16</span><span style="left:407px">–</span><span style="left:544px">MNO</span><span style="left:691px">North America</span><span style="left:904px">5.0% - 7.5%</span><span style="left:1114px">Large Cap</span></div>
<div class="r"><span class="l" style="left:16px">Position O</span><span style="left:285px">01/03/16</span><span style="left:407px">–</span><span style="left:544px">MNO</span><span style="left:691px">North America</span><span style="left:904px">5.0% - 7.5%</span><span style="left:1114px">Large Cap</span></div>
<div class="r"><span class="l" style="left:16px">Position N</span><span style="left:285px">01/03/16</span><span style="left:407px">–</span><span style="left:544px">MNO</span><span style="left:691px">North America</span><span style="left:904px">5.0% - 7.5%</span><span style="left:1114px">Large Cap</span></div>
</div>
<div class="a" style="left:551px;top:199px;width:1px;height:792px;background:#c9d6e2"></div>
<div class="a" style="left:1227px;top:248px;width:164px;height:190px;background:#fff;box-shadow:0 4px 10px rgba(40,70,100,.3);z-index:3"></div>
<div class="a" style="left:1227px;top:352px;width:164px;height:32px;background:#dde6f0;z-index:3"></div>
<div class="a" style="left:1242px;top:392px;width:135px;height:1px;background:#d5dde5;z-index:3"></div>
<div style="position:absolute;left:0;top:0;z-index:4;color:#333f4b">
<span class="t" style="left:1242px;top:272px">Configure</span><span class="t" style="left:1242px;top:304px">Duplicate</span><span class="t" style="left:1242px;top:336px">Delete</span><span class="t" style="left:1242px;top:368px">Drilldown</span><span class="t" style="left:1242px;top:416px">Pin column</span>
</div>
<div class="bx" style="left:32px;top:108px;width:192px;height:32px;z-index:3"></div>
<div class="bx" style="left:236px;top:108px;width:192px;height:32px;z-index:3"></div>
<div class="bx" style="left:440px;top:108px;width:118px;height:32px;z-index:3"></div>
<div class="bx" style="left:570px;top:108px;width:86px;height:32px;z-index:3"></div>
<div class="bx" style="left:668px;top:108px;width:78px;height:32px;z-index:3"></div>
<div class="bx" style="left:1196px;top:108px;width:37px;height:32px;z-index:3;background:#f2f2f2"></div>
<div class="a" style="left:1245px;top:108px;width:114px;height:32px;z-index:3;background:#337ab7;border:1px solid #2f6fa8"></div>
<div class="bx" style="left:1371px;top:108px;width:37px;height:32px;z-index:3"></div>
<div style="position:absolute;left:0;top:0;z-index:4">
<span class="t g" style="left:70px;top:124px">Fund A</span><span class="t g" style="left:271px;top:124px">Jun 2012</span><span class="t g" style="left:344px;top:124px">Oct 2018</span><span class="t g" style="left:480px;top:124px">Categories</span><span class="t g" style="left:607px;top:124px">Group</span><span class="t g" style="left:704px;top:124px">Filter</span><span class="t g" style="left:1261px;top:124px;color:#fff">New Category</span>
</div>
<svg class="ov" width="1440" height="1024">
<use href="#plane" x="119" y="15" fill="#fff"/>
<use href="#sr" x="1284" y="21" stroke="#c4d2e0" fill="none"/>
<use href="#chd" x="1398" y="26" stroke="#d8e2ea"/>
<use href="#lib" x="48" y="118" fill="#5c6873"/><use href="#cr" x="205" y="122" fill="#5c6873"/>
<use href="#cal" x="252" y="117" fill="#5c6873"/><rect x="332" y="115" width="1" height="18" fill="#b5c5d5"/>
<use href="#eye" x="455" y="119" fill="#5c6873"/><use href="#bars" x="585" y="118" fill="#5c6873"/><use href="#fun" x="684" y="119" fill="#5c6873"/>
<use href="#sr" x="1208" y="117" stroke="#7b8791"/><use href="#dots" x="1383" y="123" fill="#5c6873"/>
<use href="#bars" x="1362" y="219" fill="#5c6873"/>
</svg>
</div>

<!-- PANEL 4 -->
<div class="b" style="left:4680px"></div>
<div class="p" style="left:4656px">
<div class="nav"></div>
<div class="logo" style="left:31px">NOVUS</div>
<div class="act" style="left:337px;width:81px"></div>
<span class="t nv" style="left:252px">Dashboards</span><span class="t nv" style="left:353px;color:#fff">Network</span><span class="t nv" style="left:433px">Data</span><span class="t nv" style="left:494px">Documents</span><span class="t nv" style="left:592px">Reports</span>
<span class="t nv" style="left:1331px">Joe Evans</span>
<div class="sub" style="top:56px"></div>
<div class="tab" style="left:248px;top:56px;width:106px;height:40px"></div>
<span class="t s" style="left:32px;top:77px">Screens</span><span class="t s" style="left:112px;top:77px">Groups</span><span class="t s" style="left:188px;top:77px">Profiles</span><span class="t s" style="left:264px;top:77px;color:#333f4b">Connections</span>
<div class="tb" style="top:96px"></div>
<div class="card" style="left:33px;top:185px;width:994px;height:806px"></div>
<div class="hd" style="left:48px;top:200px;width:963px;height:32px;line-height:32px"><span style="left:40px">Product</span><span style="left:436.500px">Start Date</span><span style="left:594.500px">End Date</span><span style="left:744.500px">Transparency</span></div>
<div class="a" style="left:48px;top:232px;width:963px;height:47px;background:#f1f4fa"></div>
<div class="a" style="left:48px;top:279px;width:963px;height:47px;background:#fafafa"></div>
<div class="a" style="left:48px;top:373px;width:963px;height:47px;background:#fafafa"></div>
<div class="a" style="left:48px;top:467px;width:963px;height:47px;background:#fafafa"></div>
<div class="a" style="left:48px;top:561px;width:963px;height:47px;background:#fafafa"></div>
<div class="a" style="left:48px;top:655px;width:963px;height:47px;background:#fafafa"></div>
<div class="a" style="left:48px;top:749px;width:963px;height:47px;background:#fafafa"></div>
<div class="a" style="left:48px;top:843px;width:963px;height:47px;background:#fafafa"></div>
<div class="t" style="left:88px;top:256px;color:#1d5a96">Fund J</div><span class="t" style="left:484.500px;top:256px">11/02/1993</span><span class="t" style="left:642.500px;top:256px">11/02/2018</span><span class="t" style="left:792.500px;top:256px">Positions</span>
<div class="t" style="left:88px;top:303px;color:#1d5a96">Fund T</div><span class="t" style="left:484.500px;top:303px">09/14/2012</span><span class="t" style="left:642.500px;top:303px">Ongoing</span><span class="t" style="left:792.500px;top:303px">Exposure</span>
<div class="t" style="left:88px;top:350px;color:#1d5a96">Fund X</div><span class="t" style="left:484.500px;top:350px">11/01/2008</span><span class="t" style="left:642.500px;top:350px">Ongoing</span><span class="t" style="left:792.500px;top:350px">Position</span>
<div class="t" style="left:88px;top:397px;color:#1d5a96">Fund Y</div><span class="t" style="left:484.500px;top:397px">03/01/2015</span><span class="t" style="left:642.500px;top:397px">12/31/2018</span><span class="t" style="left:792.500px;top:397px">Category</span>
<div class="t" style="left:88px;top:444px;color:#1d5a96">Fund Z</div><span class="t" style="left:484.500px;top:444px">12/07/1998</span><span class="t" style="left:642.500px;top:444px">Ongoing</span><span class="t" style="left:792.500px;top:444px">Exposure</span>
<div class="t" style="left:88px;top:491px;color:#1d5a96">Fund W</div><span class="t" style="left:484.500px;top:491px">08/12/1993</span><span class="t" style="left:642.500px;top:491px">08/12/2018</span><span class="t" style="left:792.500px;top:491px">Position</span>
<div class="a" style="left:48px;top:927px;width:965px;height:2px;background:#edf1f4"></div>
<div class="bx" style="left:927px;top:944px;width:38px;height:32px;border-color:#dfe5ea"></div>
<div class="bx" style="left:974px;top:944px;width:39px;height:32px;border-color:#dfe5ea"></div>

<div class="rp" style="left:1062px;top:152px;width:378px;height:871px"></div>
<div class="bx" style="left:1085px;top:176px;width:323px;height:32px"></div><span class="t v" style="left:1096px;top:192px">Fund J</span>
<div class="a" style="left:1062px;top:231px;width:378px;height:2px;background:#edf1f4"></div>
<span class="t td" style="right:279px;top:275px">02/19/2019</span><span class="t tl" style="left:1215px;top:275px;color:#5c6873">Transparency Requested</span><span class="t ts" style="left:1215px;top:293px;color:#66717c">by Joe Evans</span>
<span class="t td" style="right:279px;top:358px">2 Days</span><span class="t tl" style="left:1215px;top:361px;color:#ffc021">Pending</span>
<span class="t td" style="right:279px;top:445px">02/20/2019</span><span class="t tl" style="left:1215px;top:445px;color:#5c6873">Reminded</span><span class="t ts" style="left:1215px;top:463px;color:#66717c">by Joe Evans</span>
<span class="t td" style="right:279px;top:529px">02/21/2019</span><span class="t tl" style="left:1215px;top:529px;color:#f2604c">Request Adjusted</span><span class="t ts" style="left:1215px;top:547px;color:#f2604c">by Fund J</span>
<span class="t td" style="right:279px;top:614px">02/21/2019</span><span class="t tl" style="left:1215px;top:614px;color:#5c6873">Accepted</span><span class="t ts" style="left:1215px;top:632px;color:#66717c">by Joe Evans</span>
<span class="t td" style="right:279px;top:697px">4 Hours</span><span class="t tl" style="left:1215px;top:699px;color:#1fc46d">Integrating</span>
<span class="t td" style="right:279px;top:783px">02/21/2019</span><span class="t tl" style="left:1215px;top:784px;color:#5b96d0">Complete</span>
<div class="bx" style="left:1187px;top:969px;width:128px;height:32px;border-color:#4a87c0"></div><span class="t bt" style="left:1237px;top:985px;color:#4a87c0">Close</span>

<div class="bx" style="left:32px;top:108px;width:168px;height:32px;z-index:3;background:#e8eef6"></div>
<div class="bx" style="left:215px;top:108px;width:129px;height:32px;z-index:3"></div>
<div class="bx" style="left:1008px;top:108px;width:192px;height:32px;z-index:3;background:#f2f2f2"></div>
<div class="a" style="left:1213px;top:108px;width:138px;height:32px;z-index:3;background:#337ab7;border:1px solid #2f6fa8"></div>
<div class="bx" style="left:1363px;top:108px;width:45px;height:32px;z-index:3"></div>
<div style="position:absolute;left:0;top:0;z-index:4">
<span class="t g" style="left:73px;top:124px">View Status History</span><span class="t g" style="left:254px;top:124px">Edit Request</span><span class="t g" style="left:1046px;top:124px">Search</span><span class="t g" style="left:1259px;top:124px;color:#fff">New Request</span>
</div>
<svg class="ov" width="1440" height="1024">
<use href="#plane" x="118" y="15" fill="#fff"/>
<use href="#home" x="203" y="20" fill="#fff"/>
<circle cx="1311" cy="28" r="12" fill="#5a5f63"/><circle cx="1311" cy="25" r="5" fill="#d8d8d8"/><path d="M1302 36c2-6 16-6 18 0l-5 4h-8z" fill="#2b2f33"/>
<use href="#chd" x="1398" y="26" stroke="#d8e2ea"/>
<use href="#hist" x="48" y="117" fill="#5c6873"/>
<use href="#edit" x="231" y="117" fill="#5c6873"/>
<use href="#sr" x="1026" y="117" stroke="#7b8791"/>
<use href="#hs" x="1229" y="116" fill="#fff"/>
<use href="#dots" x="1380" y="123" fill="#5c6873"/>
<use href="#cr" x="1390" y="190" fill="#5c6873"/>
<rect x="58" y="210" width="14" height="14" rx="3.500" fill="#3f9bff"/><rect x="61" y="216" width="8" height="2" fill="#fff"/>
<rect x="59" y="249" width="13" height="13" rx="2.500" fill="#3f9bff"/><path d="M62 256l2.500 2.500 4-5" fill="none" stroke="#fff" stroke-width="1.300"/>
<path d="M950 952l-4 8 4 8z" fill="#bfcbd6"/><path d="M990 952l4 8-4 8z" fill="#bfcbd6"/>
<rect x="1188" y="285" width="1" height="65" fill="#8b97a3"/><rect x="1188" y="310" width="1" height="40" fill="#e8b23c"/>
<rect x="1188" y="370" width="1" height="65" fill="#e8b23c"/><rect x="1188" y="405" width="1" height="30" fill="#8b97a3"/>
<rect x="1188" y="455" width="1" height="64" fill="#8b97a3"/><rect x="1188" y="495" width="1" height="24" fill="#f2604c"/>
<rect x="1188" y="539" width="1" height="65" fill="#f2604c"/><rect x="1188" y="585" width="1" height="19" fill="#6d7a87"/>
<rect x="1188" y="624" width="1" height="64" fill="#6d7a87"/><rect x="1188" y="660" width="1" height="28" fill="#1fc46d"/>
<rect x="1188" y="708" width="1" height="65" fill="#1fc46d"/><rect x="1188" y="750" width="1" height="23" fill="#5b96d0"/>
<circle cx="1188.500" cy="275" r="9.500" fill="#d2d6db" stroke="#6d7a87"/>
<circle cx="1188.500" cy="360" r="9.500" fill="#ffeac2" stroke="#ffc021"/>
<circle cx="1188.500" cy="445.500" r="9.500" fill="#d2d6db" stroke="#6d7a87"/>
<circle cx="1188.500" cy="529" r="9.500" fill="#fbd0c9" stroke="#f2604c"/>
<circle cx="1188.500" cy="614" r="9.500" fill="#d2d6db" stroke="#6d7a87"/>
<circle cx="1188.500" cy="698" r="9.500" fill="#c4f0d8" stroke="#1fc46d"/>
<circle cx="1188.500" cy="783" r="9.500" fill="#d0dff0" stroke="#5b96d0"/>
</svg>
</div>
</div></div>
<script>
(function(){var w=document.documentElement.clientWidth||window.innerWidth;if(w>0&&w<6120){document.getElementById('root').style.transform='scaleX('+(w/6120)+')';}})();
</script>
</body></html>
